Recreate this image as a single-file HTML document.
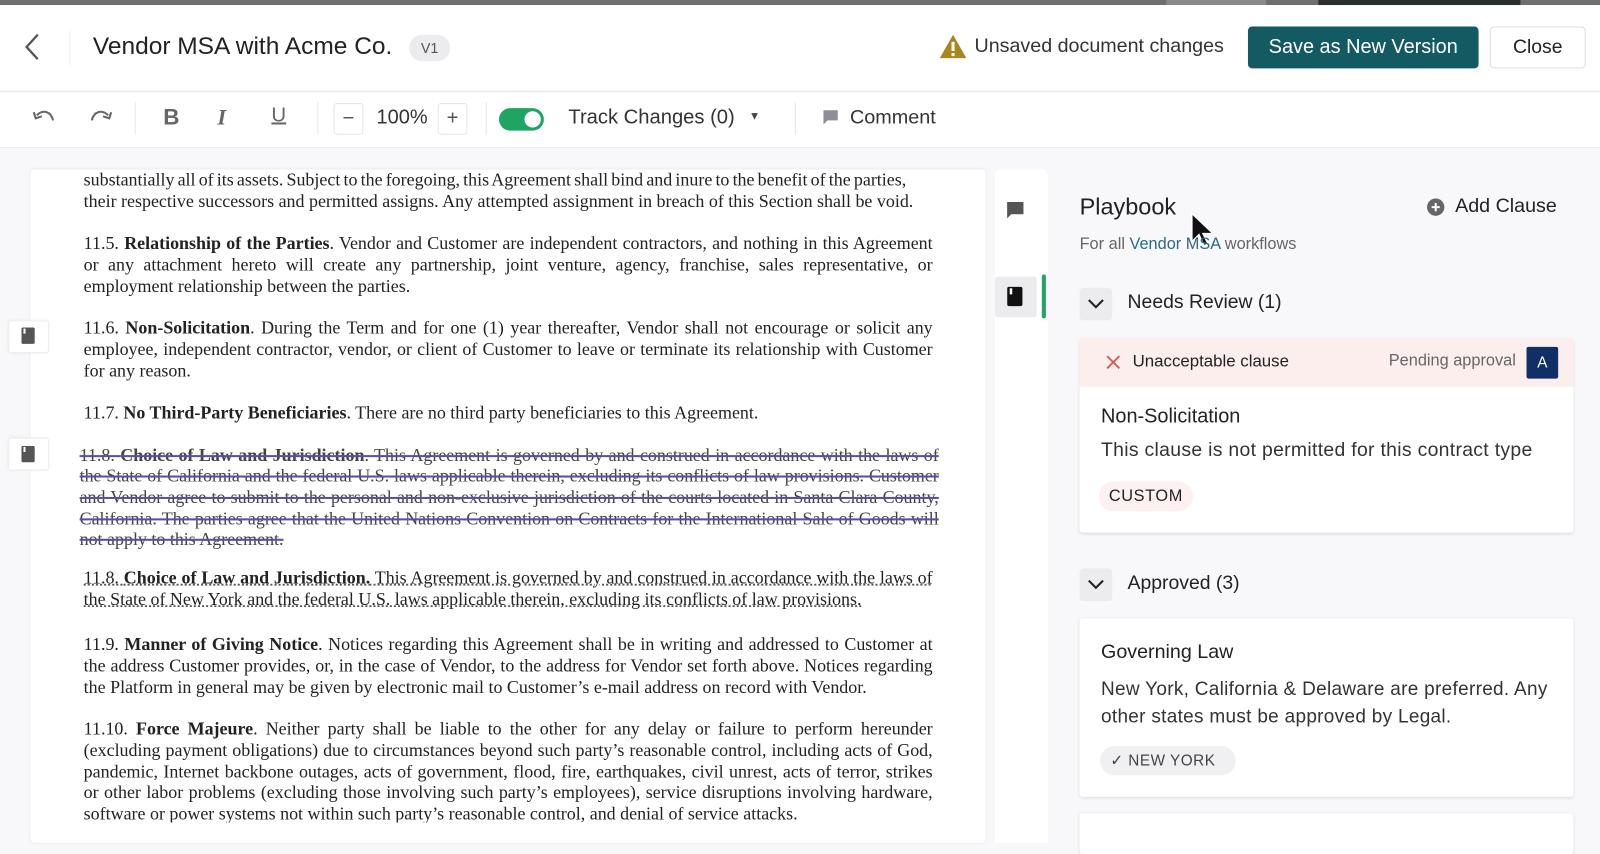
<!DOCTYPE html>
<html><head><meta charset="utf-8"><style>
*{box-sizing:border-box;margin:0;padding:0}
html,body{width:1600px;height:816px;overflow:hidden;background:#f8f8fa}
#w{position:absolute;left:0;top:0;width:1568px;height:800px;transform:scale(1.0204);transform-origin:0 0;font-family:"Liberation Sans",sans-serif;color:#222}
.abs{position:absolute}
.top{left:0;top:0;width:1568px;height:5px;background:#6f6f6f}
.hdr{left:0;top:5px;width:1568px;height:85px;background:#fff;border-bottom:1px solid #e6e6e8}
.tb{left:0;top:91px;width:1568px;height:54px;background:#fff;border-bottom:1px solid #ececee}
.doc{left:30px;top:166px;width:936px;height:660px;background:#fff;box-shadow:0 0 3px rgba(0,0,0,.08);border-radius:4px}
.txt{left:72px;top:166px;width:856px;font-family:"Liberation Serif",serif;font-size:17.6px;line-height:20.7px;color:#222;text-align:justify;overflow:hidden;height:640px}
.txt p{margin:0 14px 20.8px 10px}
.txt p.del{margin:0 8px 0 6px;padding-bottom:17px;color:#444;text-decoration:line-through;text-decoration-color:#5a4fa6;text-decoration-thickness:2px}
.ins{text-decoration:underline dotted #555}
.rail{left:975px;top:166px;width:52px;height:660px;background:#fff;border-radius:6px 6px 0 0}
.mi{width:40px;height:32px;background:#fff;border:1px solid #eee;border-radius:3px;box-shadow:0 0 3px rgba(0,0,0,.06)}
.card{background:#fff;border-radius:3px;box-shadow:0 1px 3px rgba(0,0,0,.12)}
.chev{width:32px;height:32px;background:#ececef;border-radius:4px}
</style></head><body><div id="w">
<div class="abs top"></div>
<div class="abs" style="left:1143px;top:0;width:98px;height:5px;background:#8a8a8a"></div>
<div class="abs" style="left:1292px;top:0;width:198px;height:5px;background:#2b2f30"></div>
<div class="abs hdr"></div>
<svg class="abs" style="left:20px;top:31px" width="24" height="30"><path d="M17 3 L6 15 L17 27" stroke="#555" stroke-width="2.2" fill="none"/></svg>
<div class="abs" style="left:68px;top:30px;width:1px;height:34px;background:#eee"></div>
<div class="abs" style="left:91px;top:32px;font-size:24px;color:#222">Vendor MSA with Acme Co.</div>
<div class="abs" style="left:401px;top:34px;width:40px;height:26px;background:#ebebf0;border-radius:13px;font-size:14px;color:#555;text-align:center;line-height:26px">V1</div>
<svg class="abs" style="left:920px;top:33px" width="28" height="25"><path d="M14 1 L27 24 L1 24 Z" fill="#a8861c"/><rect x="12.5" y="8" width="3" height="9" fill="#fff"/><rect x="12.5" y="19" width="3" height="3" fill="#fff"/></svg>
<div class="abs" style="left:955px;top:35px;font-size:19.3px;color:#333">Unsaved document changes</div>
<div class="abs" style="left:1223px;top:26px;width:226px;height:41px;background:#135a63;border-radius:4px;color:#fff;font-size:19.5px;text-align:center;line-height:41px">Save as New Version</div>
<div class="abs" style="left:1460px;top:26px;width:94px;height:41px;background:#fff;border:1px solid #ddd;border-radius:4px;color:#222;font-size:19px;text-align:center;line-height:39px">Close</div>
<div class="abs tb"></div>
<svg class="abs" style="left:30px;top:105px" width="80" height="22"><path d="M6 8 C12 2 20 4 22 13" stroke="#666" stroke-width="2" fill="none"/><path d="M3 5 L5 11 L11 9" stroke="#666" stroke-width="2" fill="none"/><path d="M76 8 C70 2 62 4 60 13" stroke="#666" stroke-width="2" fill="none"/><path d="M79 5 L77 11 L71 9" stroke="#666" stroke-width="2" fill="none"/></svg>
<div class="abs" style="left:132px;top:100px;width:1px;height:32px;background:#e8e8e8"></div>
<div class="abs" style="left:160px;top:102px;font-size:22px;font-weight:bold;color:#666">B</div>
<div class="abs" style="left:213px;top:102px;font-size:22px;font-weight:bold;font-style:italic;color:#666;font-family:'Liberation Serif',serif">I</div>
<div class="abs" style="left:266px;top:102px;font-size:20px;color:#666;text-decoration:underline">U</div>
<div class="abs" style="left:311px;top:100px;width:1px;height:32px;background:#e8e8e8"></div>
<div class="abs" style="left:327px;top:101px;width:29px;height:31px;border:1px solid #e6e6e6;border-radius:3px;text-align:center;line-height:28px;font-size:20px;color:#555">−</div>
<div class="abs" style="left:369px;top:104px;font-size:19.6px;color:#333">100%</div>
<div class="abs" style="left:429px;top:101px;width:29px;height:31px;border:1px solid #e6e6e6;border-radius:3px;text-align:center;line-height:28px;font-size:20px;color:#555">+</div>
<div class="abs" style="left:476px;top:100px;width:1px;height:32px;background:#e8e8e8"></div>
<div class="abs" style="left:489px;top:106px;width:44px;height:22px;background:#1fa562;border-radius:11px"><div style="position:absolute;right:3px;top:3px;width:16px;height:16px;background:#fff;border-radius:50%"></div></div>
<div class="abs" style="left:557px;top:104px;font-size:19.8px;color:#333">Track Changes (0)</div>
<div class="abs" style="left:734px;top:108px;font-size:11px;color:#444">▼</div>
<div class="abs" style="left:779px;top:100px;width:1px;height:32px;background:#e8e8e8"></div>
<svg class="abs" style="left:806px;top:107px" width="16" height="16"><path d="M1 1 H15 V11 H5 L1 15 Z" fill="#8e8e96"/></svg>
<div class="abs" style="left:833px;top:104px;font-size:19.4px;color:#333">Comment</div>

<div class="abs doc"></div>
<div class="abs txt">
<p style="margin-top:0;margin-bottom:0;white-space:nowrap;word-spacing:-1.3px;overflow:hidden">substantially all of its assets. Subject to the foregoing, this Agreement shall bind and inure to the benefit of the parties,</p>
<p>their respective successors and permitted assigns. Any attempted assignment in breach of this Section shall be void.</p>
<p>11.5. <b>Relationship of the Parties</b>. Vendor and Customer are independent contractors, and nothing in this Agreement or any attachment hereto will create any partnership, joint venture, agency, franchise, sales representative, or employment relationship between the parties.</p>
<p>11.6. <b>Non-Solicitation</b>. During the Term and for one (1) year thereafter, Vendor shall not encourage or solicit any employee, independent contractor, vendor, or client of Customer to leave or terminate its relationship with Customer for any reason.</p>
<p>11.7. <b>No Third-Party Beneficiaries</b>. There are no third party beneficiaries to this Agreement.</p>
<p class="del">11.8. <b>Choice of Law and Jurisdiction</b>. This Agreement is governed by and construed in accordance with the laws of the State of California and the federal U.S. laws applicable therein, excluding its conflicts of law provisions. Customer and Vendor agree to submit to the personal and non-exclusive jurisdiction of the courts located in Santa Clara County, California. The parties agree that the United Nations Convention on Contracts for the International Sale of Goods will not apply to this Agreement.</p>
<p class="ins" style="margin-bottom:24px">11.8. <b>Choice of Law and Jurisdiction.</b> This Agreement is governed by and construed in accordance with the laws of the State of New York and the federal U.S. laws applicable therein, excluding its conflicts of law provisions.</p>
<p>11.9. <b>Manner of Giving Notice</b>. Notices regarding this Agreement shall be in writing and addressed to Customer at the address Customer provides, or, in the case of Vendor, to the address for Vendor set forth above. Notices regarding the Platform in general may be given by electronic mail to Customer’s e-mail address on record with Vendor.</p>
<p>11.10. <b>Force Majeure</b>. Neither party shall be liable to the other for any delay or failure to perform hereunder (excluding payment obligations) due to circumstances beyond such party’s reasonable control, including acts of God, pandemic, Internet backbone outages, acts of government, flood, fire, earthquakes, civil unrest, acts of terror, strikes or other labor problems (excluding those involving such party’s employees), service disruptions involving hardware, software or power systems not within such party’s reasonable control, and denial of service attacks.</p>
</div>
<div class="abs mi" style="left:8px;top:314px"></div>
<svg class="abs" style="left:21px;top:321px" width="14" height="17"><rect x="0" y="0" width="13" height="16" rx="1.5" fill="#555"/><rect x="2" y="1" width="2" height="5" fill="#fff"/></svg>
<div class="abs mi" style="left:8px;top:429px"></div>
<svg class="abs" style="left:21px;top:437px" width="14" height="17"><rect x="0" y="0" width="13" height="16" rx="1.5" fill="#555"/><rect x="2" y="1" width="2" height="5" fill="#fff"/></svg>

<div class="abs rail"></div>
<svg class="abs" style="left:986px;top:197px" width="18" height="18"><path d="M1 1 H17 V13 H5 L1 17 Z" fill="#555"/></svg>
<div class="abs" style="left:975px;top:271px;width:41px;height:40px;background:#ececef;border-radius:3px"></div>
<svg class="abs" style="left:987px;top:281px" width="16" height="20"><rect x="0" y="0" width="15" height="19" rx="2" fill="#111"/><rect x="2.5" y="1.5" width="2.5" height="6" fill="#fff"/></svg>
<div class="abs" style="left:1021px;top:269px;width:4px;height:43px;background:#1fa562;border-radius:2px"></div>

<div class="abs" style="left:1058px;top:189px;font-size:23px;color:#222">Playbook</div>
<svg class="abs" style="left:1166px;top:207px" width="26" height="38"><path d="M2 2 L2 30 L9 23 L14 34 L18 32 L13 22 L23 22 Z" fill="#111" stroke="#fff" stroke-width="1.5"/></svg>
<svg class="abs" style="left:1398px;top:194px" width="18" height="18"><circle cx="9" cy="9" r="8.5" fill="#666"/><path d="M9 5V13M5 9H13" stroke="#fff" stroke-width="2"/></svg>
<div class="abs" style="left:1426px;top:192px;font-size:19.3px;color:#222">Add Clause</div>
<div class="abs" style="left:1058px;top:231px;font-size:16px;color:#666">For all <span style="color:#2d6b8a">Vendor MSA</span> workflows</div>

<div class="abs chev" style="left:1058px;top:282px"></div>
<svg class="abs" style="left:1064px;top:290px" width="20" height="16"><path d="M3 4 L10 11 L17 4" stroke="#222" stroke-width="2" fill="none"/></svg>
<div class="abs" style="left:1105px;top:286px;font-size:19px;color:#222">Needs Review (1)</div>
<div class="abs card" style="left:1058px;top:332px;width:484px;height:190px"></div>
<div class="abs" style="left:1058px;top:332px;width:484px;height:47px;background:#fdeeee;border-radius:3px 3px 0 0"></div>
<svg class="abs" style="left:1083px;top:347px" width="16" height="16"><path d="M2 2 L14 14 M14 2 L2 14" stroke="#d9534f" stroke-width="1.8"/></svg>
<div class="abs" style="left:1110px;top:345px;font-size:16.5px;color:#222">Unacceptable clause</div>
<div class="abs" style="left:1361px;top:345px;font-size:16px;color:#666">Pending approval</div>
<div class="abs" style="left:1496px;top:340px;width:31px;height:31px;background:#0f2f66;border-radius:2px;color:#fff;font-size:15px;text-align:center;line-height:31px">A</div>
<div class="abs" style="left:1079px;top:397px;font-size:19.5px;color:#222">Non-Solicitation</div>
<div class="abs" style="left:1079px;top:431px;font-size:19px;letter-spacing:.3px;color:#333;white-space:nowrap">This clause is not permitted for this contract type</div>
<div class="abs" style="left:1077px;top:472px;width:92px;height:29px;background:#fdf0f0;border-radius:14px;font-size:16px;letter-spacing:.6px;color:#222;text-align:center;line-height:29px">CUSTOM</div>

<div class="abs chev" style="left:1058px;top:557px"></div>
<svg class="abs" style="left:1064px;top:565px" width="20" height="16"><path d="M3 4 L10 11 L17 4" stroke="#222" stroke-width="2" fill="none"/></svg>
<div class="abs" style="left:1105px;top:561px;font-size:19px;color:#222">Approved (3)</div>
<div class="abs card" style="left:1058px;top:606px;width:484px;height:175px"></div>
<div class="abs" style="left:1079px;top:629px;font-size:19.3px;color:#222">Governing Law</div>
<div class="abs" style="left:1079px;top:661px;width:455px;font-size:18.6px;letter-spacing:.3px;line-height:27px;color:#333">New York, California &amp; Delaware are preferred. Any other states must be approved by Legal.</div>
<div class="abs" style="left:1078px;top:731px;width:133px;height:29px;background:#f0f0f2;border-radius:15px;font-size:15px;letter-spacing:.5px;color:#444;line-height:29px;padding-left:10px">✓ NEW YORK</div>
<div class="abs card" style="left:1058px;top:797px;width:484px;height:40px"></div>
</div></body></html>
